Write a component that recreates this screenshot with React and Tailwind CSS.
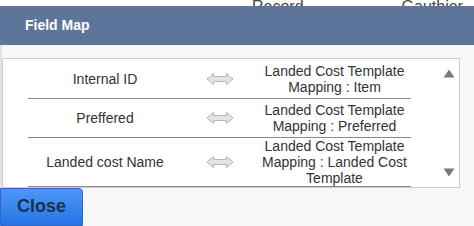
import React from 'react'

function SwapArrow() {
  return (
    <svg width="28" height="14" viewBox="0 0 28 14" fill="none">
      <path
        d="M1 7L7.5 1.5V4.5H20.5V1.5L27 7L20.5 12.5V9.5H7.5V12.5Z"
        fill="#e4e4e4"
        stroke="#b5b5b5"
        strokeWidth="1"
        strokeLinejoin="round"
      />
    </svg>
  )
}

const ROWS = [
  { left: 'Internal ID', right: ['Landed Cost Template', 'Mapping : Item'], h: 'h-[40px]' },
  { left: 'Preffered', right: ['Landed Cost Template', 'Mapping : Preferred'], h: 'h-[39px]' },
  { left: 'Landed cost Name', right: ['Landed Cost Template', 'Mapping : Landed Cost', 'Template'], h: 'h-[49px]' },
]

export default function App() {
  return (
    <div
      className="w-[474px] h-[226px] overflow-hidden bg-[#f7f7f7] flex flex-col"
      style={{ fontFamily: '"Liberation Sans", Arial, sans-serif' }}
    >
      {/* page behind, mostly hidden */}
      <div className="h-[6px] shrink-0 bg-white overflow-hidden flex text-[16px] leading-none text-[#444]">
        <span className="ml-[252px] mt-[-1px]">Record</span>
        <span className="ml-[98px] mt-[-1px]">Gauthier</span>
      </div>

      {/* Header */}
      <div className="h-[39px] shrink-0 bg-[#5d7598] flex items-center pl-[25px]">
        <span className="text-white font-bold text-[14px]">Field Map</span>
      </div>

      {/* Body */}
      <div className="shrink-0 border-l-2 border-[#e3e3e3] pt-[13px]">
        <div className="w-[458px] h-[130px] border border-[#cdcdcd] bg-white flex">
          <div className="w-[408px] pl-[25px] flex flex-col">
            {ROWS.map((r, i) => (
              <div
                key={i}
                className={`${r.h} shrink-0 flex items-center border-b border-[#8a8a8a] text-[14px] leading-[16px] text-[#333]`}
              >
                <div className="w-[154px] text-center">{r.left}</div>
                <div className="w-[76px] flex justify-center">
                  <SwapArrow />
                </div>
                <div className="w-[153px] text-center">
                  {r.right.map((t, j) => (
                    <div key={j}>{t}</div>
                  ))}
                </div>
              </div>
            ))}
          </div>
          <div className="flex-1 flex flex-col items-end pr-[4px] py-[10px] justify-between">
            <svg width="12" height="9" viewBox="0 0 12 9">
              <path d="M6 0.5L11.5 8.5H0.5Z" fill="#7a7a7a" />
            </svg>
            <svg width="12" height="9" viewBox="0 0 12 9">
              <path d="M0.5 0.5H11.5L6 8.5Z" fill="#7a7a7a" />
            </svg>
          </div>
        </div>
      </div>

      {/* Close button */}
      <div className="flex shrink-0">
        <button className="w-[83px] h-[38px] rounded-tr-[4px] border border-[#2f67c9] bg-gradient-to-b from-[#4d98f6] to-[#2474e6] text-left pl-[16px] pb-[2px] text-[18px] font-bold text-[#1c2f4e]">
          Close
        </button>
      </div>
    </div>
  )
}
